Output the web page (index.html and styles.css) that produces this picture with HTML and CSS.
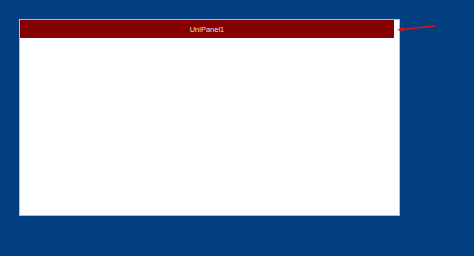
FILE: index.html
```html
<!DOCTYPE html>
<html>
<head>
<meta charset="utf-8">
<link rel="stylesheet" href="styles.css">
</head>
<body>
<div class="desk">
  <div class="panel">
    <div class="header">UniPanel1</div>
  </div>
  <svg class="arrow" width="44" height="10" viewBox="0 0 44 10">
    <line x1="40" y1="2" x2="6" y2="5.5" stroke="#e01010" stroke-width="1.4"/>
    <polygon points="2,6 8,3.2 8.6,7.6" fill="#e01010"/>
  </svg>
</div>
</body>
</html>
```
FILE: styles.css
```css
html, body {
  margin: 0;
  padding: 0;
  background: #023f80;
  width: 474px;
  height: 256px;
  overflow: hidden;
}
.desk {
  position: relative;
  padding: 19px 0 0 19px;
}
.panel {
  width: 379px;
  height: 195px;
  background: #fff;
  border: 1px solid #b8bcc4;
  display: flex;
  flex-direction: column;
}
.header {
  height: 18px;
  box-sizing: border-box;
  padding-top: 1px;
  margin-right: 5px;
  background: #850000;
  color: #f3dede;
  font-family: "Liberation Sans", sans-serif;
  font-size: 7.5px;
  display: flex;
  align-items: center;
  justify-content: center;
}
.arrow {
  position: absolute;
  left: 395px;
  top: 24px;
}
```
